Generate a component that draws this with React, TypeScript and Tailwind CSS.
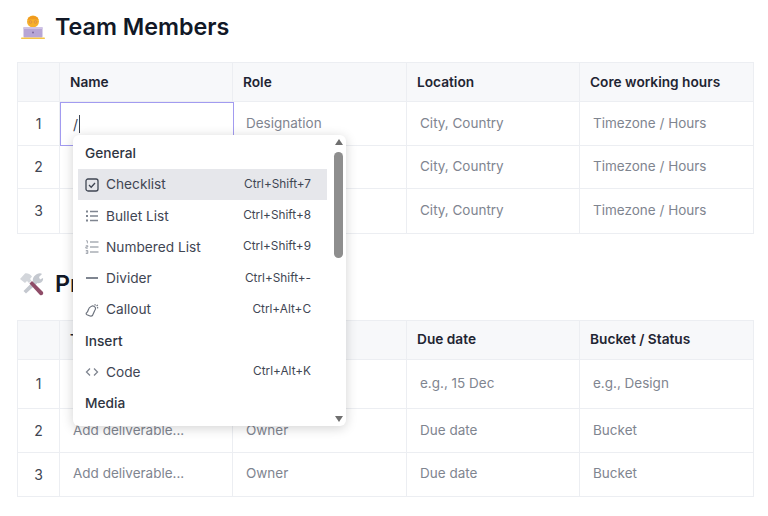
const cols = "grid grid-cols-[42px_173px_174px_173px_175px]";

function Cell({ children, head, last, flat }: { children?: React.ReactNode; head?: boolean; last?: boolean; flat?: boolean }) {
  return (
    <div className={`flex items-center ${last ? "" : "border-r border-[#eceef2]"} ${head ? "pl-[10px] text-[13.7px] font-semibold text-[#1f2533]" : `${flat ? "" : "pb-[1px]"} pl-[13px] text-[13.5px] text-[#7f8590]`}`}>
      {children}
    </div>
  );
}

function Row({ n, cells, h, last, flat }: { n: string; cells: React.ReactNode[]; h: string; last?: boolean; flat?: boolean }) {
  return (
    <div className={`${cols} ${h} ${last ? "" : "border-b border-[#eceef2]"}`}>
      <div className="flex items-center justify-center border-r border-[#eceef2] text-[14px] text-[#3f4653]">{n}</div>
      {cells.map((c, i) => (
        <Cell key={i} flat={flat} last={i === cells.length - 1}>{c}</Cell>
      ))}
    </div>
  );
}

function Header({ labels }: { labels: string[] }) {
  return (
    <div className={`${cols} h-[39px] bg-[#f7f8fa] border-b border-[#eceef2]`}>
      <Cell head />
      {labels.map((l, i) => (
        <Cell key={l} head last={i === labels.length - 1}>{l}</Cell>
      ))}
    </div>
  );
}

function Technologist() {
  return (
    <svg width="26" height="26" viewBox="0 0 26 26" className="shrink-0">
      <circle cx="13" cy="7.5" r="6" fill="#f6b02c" />
      <path d="M7.500 6c1-3 3-4 5.500-4s5 1 5.500 4c-2-1-9-1-11 0z" fill="#f09a1e" />
      <circle cx="10.500" cy="8" r="1.400" fill="#eea63f" stroke="#d98a3a" strokeWidth="0.600" />
      <circle cx="15.500" cy="8" r="1.400" fill="#eea63f" stroke="#d98a3a" strokeWidth="0.600" />
      <rect x="3.500" y="13" width="19" height="10.500" rx="1" fill="#b7a6d6" />
      <rect x="3.500" y="13" width="19" height="2" fill="#cfc3e6" />
      <circle cx="13" cy="18.500" r="1" fill="#7c6a9e" />
      <rect x="1" y="23.500" width="24" height="1.400" rx="0.700" fill="#f5c445" />
    </svg>
  );
}

function Tools() {
  return (
    <svg width="26" height="26" viewBox="0 0 26 26" className="shrink-0 -translate-x-[1px]">
      <path d="M18 2c2-1 4-1 5 0l-3 3 1 2.500 3-1.500c.8 3-2.500 6-5.500 5L7 21.500 4.500 19l9.500-9.500c-.8-3 1-6 4-7.500z" fill="#c4c8cf" />
      <path d="M1 7l5-5.500c2-.6 5 .5 7 3l-2 2.500 1.500 1.500-2.500 2.500L8 9l-2 2z" fill="#d3d6db" />
      <path d="M10.500 11.500l2.500-2.500 11 11c1 2-1 4-3 3z" fill="#8f4c68" />
    </svg>
  );
}

function BulletIcon() {
  return (
    <svg width="14" height="14" viewBox="0 0 14 14" fill="none" stroke="currentColor" strokeWidth="1.300">
      <path d="M5 2.500h8M5 7h8M5 11.500h8" />
      <path d="M1 1.500h2v2H1zM1 6h2v2H1zM1 10.500h2v2H1z" fill="currentColor" stroke="none" />
    </svg>
  );
}

function NumberedIcon() {
  return (
    <svg width="14" height="14" viewBox="0 0 14 14" fill="none" stroke="currentColor" strokeWidth="1.200">
      <path d="M5 2h8.500M5 7h8.500M5 12h8.500" />
      <path d="M1 .800h1.400v2.600M.800 5.700h2v1.200h-2v1.300h2M.800 10.500h2v3h-2M.800 12h2" strokeWidth="0.700" />
    </svg>
  );
}

function CheckIcon() {
  return (
    <svg width="14" height="14" viewBox="0 0 14 14" fill="none" stroke="#3f4653" strokeWidth="1.300">
      <rect x="1" y="1" width="12" height="12" rx="2" />
      <path d="M4 7l2.200 2.200L10 5" />
    </svg>
  );
}

function DividerIcon() {
  return (
    <svg width="14" height="14" viewBox="0 0 14 14" fill="none" stroke="currentColor" strokeWidth="1.800">
      <path d="M1 7h12" />
    </svg>
  );
}

function CalloutIcon() {
  return (
    <svg width="14" height="14" viewBox="0 0 14 14" fill="none" stroke="#6b717c" strokeWidth="1.200">
      <path d="M6.500 3.200c1.500-.8 3.500.2 4 1.800.3 1-.3 2-1 3L7.500 12.500c-.5.500-1.500.7-2.500.5L2 11.800c-.8-.4-1-1-.8-1.600.8-.4 1.700-1.500 2-3 .4-1.800 1.800-3.400 3.300-4z" />
      <path d="M9.800 1.200l.5 1.300M12.800 1.800l-1.200 1.200M13.200 4.800l-1.300-.2" />
    </svg>
  );
}

function CodeIcon() {
  return (
    <svg width="14" height="14" viewBox="0 0 14 14" fill="none" stroke="currentColor" strokeWidth="1.300">
      <path d="M5 3.500L1.500 7 5 10.500M9 3.500L12.500 7 9 10.500" />
    </svg>
  );
}

const items = [
  { icon: <CheckIcon />, label: "Checklist", key: "Ctrl+Shift+7", active: true },
  { icon: <BulletIcon />, label: "Bullet List", key: "Ctrl+Shift+8" },
  { icon: <NumberedIcon />, label: "Numbered List", key: "Ctrl+Shift+9" },
  { icon: <DividerIcon />, label: "Divider", key: "Ctrl+Shift+-" },
  { icon: <CalloutIcon />, label: "Callout", key: "Ctrl+Alt+C" },
];

function Item({ icon, label, k, active }: { icon: React.ReactNode; label: string; k: string; active?: boolean }) {
  return (
    <div className={`flex h-[31.3px] items-center pl-[7px] pr-4 ${active ? "bg-[#e6e7eb]" : ""}`}>
      <span className="flex w-[21px] text-[#7f8590]">{icon}</span>
      <span className="flex-1 text-[13.7px] text-[#3f4653]">{label}</span>
      <span className="text-[11.8px] text-[#3f4653]">{k}</span>
    </div>
  );
}

function Group({ children }: { children: React.ReactNode }) {
  return <div className="flex h-[31.3px] items-center pl-[7px] text-[13.7px] font-medium text-[#2f3542]">{children}</div>;
}

function Menu() {
  return (
    <div className="absolute left-[73px] top-[135px] h-[291px] w-[273px] overflow-hidden rounded-md bg-white shadow-[0_2px_12px_rgba(0,0,0,0.18)]">
      <div className="ml-[5px] mt-[2.6px] w-[249px]">
        <Group>General</Group>
        {items.map((it) => (
          <Item key={it.label} icon={it.icon} label={it.label} k={it.key} active={it.active} />
        ))}
        <Group>Insert</Group>
        <Item icon={<CodeIcon />} label="Code" k="Ctrl+Alt+K" />
        <Group>Media</Group>
      </div>
      <div className="absolute right-[3px] top-[4px] flex h-[283px] w-[9px] flex-col items-center justify-between">
        <div className="flex flex-col items-center">
          <div className="h-0 w-0 border-x-[4px] border-b-[6px] border-x-transparent border-b-[#6f6f6f]" />
          <div className="mt-[7px] h-[106px] w-[9px] rounded-full bg-[#8e8e8e]" />
        </div>
        <div className="h-0 w-0 border-x-[4px] border-t-[6px] border-x-transparent border-t-[#6f6f6f]" />
      </div>
    </div>
  );
}

export default function App() {
  return (
    <div className="relative h-[516px] w-[768px] overflow-hidden bg-white font-['Inter',sans-serif]">
      <div className="px-[17px] pt-[14px]">
        <div className="flex h-[26px] items-center gap-[9px] pl-[3px] text-[23.3px] font-semibold text-[#111827]">
          <Technologist />
          <span>Team Members</span>
        </div>
        <div className="mt-[22px] w-[737px] border border-[#eceef2]">
          <Header labels={["Name", "Role", "Location", "Core working hours"]} />
          {[1, 2, 3].map((n) => (
            <Row
              key={n}
              n={String(n)}
              h="h-[43.5px]"
              last={n === 3}
              cells={["", "Designation", "City, Country", "Timezone / Hours"]}
            />
          ))}
        </div>
        <div className="mt-[38px] flex h-[26px] items-center gap-[9px] pl-[3px] text-[23.3px] font-semibold text-[#111827]">
          <Tools />
          <span>Project Tasks</span>
        </div>
        <div className="mt-[22px] w-[737px] border border-[#eceef2]">
          <Header labels={["Task / Deliverable", "Owner", "Due date", "Bucket / Status"]} />
          <Row n="1" h="h-[49px]" flat cells={["e.g., Wireframes", "e.g., Designer", "e.g., 15 Dec", "e.g., Design"]} />
          <Row n="2" h="h-[44px]" flat cells={["Add deliverable...", "Owner", "Due date", "Bucket"]} />
          <Row n="3" h="h-[43px]" last cells={["Add deliverable...", "Owner", "Due date", "Bucket"]} />
        </div>
      </div>
      <div className="absolute left-[60px] top-[102px] flex h-[44px] w-[174px] items-center border border-[#a29bf0] bg-white pl-[12px] text-[14px] text-[#3f4653]">
        /<span className="ml-[1px] h-[18px] w-px bg-[#3f4653]" />
      </div>
      <Menu />
    </div>
  );
}
